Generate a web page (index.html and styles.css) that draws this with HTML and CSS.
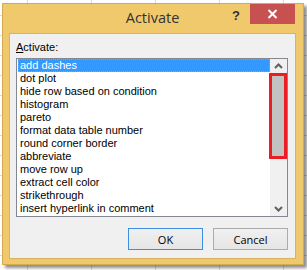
FILE: index.html
```html
<!DOCTYPE html>
<html lang="en">
<head>
  <meta charset="UTF-8">
  <title>Activate</title>
  <link rel="stylesheet" href="styles.css">
</head>
<body>
<div class="sheet">

  <!-- Dialog window -->
  <div class="dialog">
    <div class="titlebar">
      <span class="title">Activate</span>
      <span class="help">?</span>
      <span class="close">
        <svg width="11" height="10" viewBox="0 0 11 10"><path d="M1.5 1 L9.5 9 M9.5 1 L1.5 9" stroke="#fff" stroke-width="2"/></svg>
      </span>
    </div>

    <div class="client">
      <label class="caption"><u>A</u>ctivate:</label>

      <div class="listbox">
        <ul class="items">
          <li class="selected">add dashes</li>
          <li>dot plot</li>
          <li>hide row based on condition</li>
          <li>histogram</li>
          <li>pareto</li>
          <li>format data table number</li>
          <li>round corner border</li>
          <li>abbreviate</li>
          <li>move row up</li>
          <li>extract cell color</li>
          <li>strikethrough</li>
          <li>insert hyperlink in comment</li>
        </ul>
        <div class="scrollbar">
          <div class="arrow">
            <svg width="9" height="6" viewBox="0 0 9 6"><path d="M1 5 L4.5 1.5 L8 5" fill="none" stroke="#606060" stroke-width="2"/></svg>
          </div>
          <div class="track">
            <div class="thumb"></div>
          </div>
          <div class="arrow">
            <svg width="9" height="6" viewBox="0 0 9 6"><path d="M1 1 L4.5 4.5 L8 1" fill="none" stroke="#606060" stroke-width="2"/></svg>
          </div>
        </div>
      </div>

      <div class="buttons">
        <button class="btn btn-default">OK</button>
        <button class="btn">Cancel</button>
      </div>
    </div>
  </div>

</div>
</body>
</html>
```

FILE: styles.css
```css
body {
  margin: 0;
  font-family: "Liberation Sans", Arial, sans-serif;
}

.sheet {
  width: 307px;
  height: 270px;
  overflow: hidden;
  background-color: #fff;
  background-image:
    linear-gradient(to right, #dadada 1px, transparent 1px),
    linear-gradient(to bottom, #dadada 1px, transparent 1px);
  background-size: 64px 20px;
  background-position: 27px 15px;
  padding-top: 3px;
  box-sizing: border-box;
}

.dialog {
  margin-left: 2px;
  width: 302px;
  height: 262px;
  box-sizing: border-box;
  background: #f1c96d;
  border: 1px solid #d5ab52;
  padding: 0 7px 5px 6px;
  display: flex;
  flex-direction: column;
  box-shadow: 3px 3px 3px rgba(0,0,0,0.45);
}

.titlebar {
  height: 29px;
  display: flex;
  align-items: flex-start;
  position: relative;
}

.title {
  position: absolute;
  left: 0;
  right: 0;
  top: 4px;
  text-align: center;
  font-family: "Open Sans", sans-serif;
  font-size: 14.5px;
  color: #333;
}

.help {
  margin-left: auto;
  margin-top: 4px;
  margin-right: 10px;
  font-family: "Liberation Sans", sans-serif;
  font-weight: bold;
  font-size: 13px;
  color: #333;
  position: relative;
}

.close {
  width: 45px;
  height: 20px;
  background: #c75050;
  display: flex;
  align-items: center;
  justify-content: center;
  margin-right: 1px;
  position: relative;
}

.client {
  flex: 1;
  background: #f0f0f0;
  border: 1px solid #d9b460;
  padding: 7px 7px 0 6px;
}

.caption {
  display: block;
  font-size: 11px;
  line-height: 13px;
  color: #000;
  margin-bottom: 4px;
}

.listbox {
  height: 159px;
  box-sizing: border-box;
  border: 1px solid #828790;
  background: #fff;
  display: flex;
}

.items {
  flex: 1;
  list-style: none;
  margin: 0;
  padding: 0 0 0 1px;
  font-size: 11px;
  line-height: 13px;
  color: #000;
}

.items li {
  padding-left: 2px;
  white-space: nowrap;
}

.items li.selected {
  background: #3399ff;
  color: #fff;
  outline: 1px dotted #e8903a;
  outline-offset: -1px;
}

.scrollbar {
  width: 17px;
  background: #f0f0f0;
  display: flex;
  flex-direction: column;
}

.arrow {
  height: 14px;
  display: flex;
  align-items: center;
  justify-content: center;
}

.track {
  flex: 1;
  position: relative;
}

.thumb {
  height: 80px;
  margin-top: 0;
  margin-left: -1px;
  background: #c2c2c2;
  border: 3px solid #ec1c24;
}

.buttons {
  display: flex;
  justify-content: flex-end;
  gap: 10px;
  margin-top: 11px;
}

.btn {
  width: 75px;
  height: 22px;
  border: 1px solid #acacac;
  background: linear-gradient(#f0f0f0, #e5e5e5);
  font-family: "Open Sans", sans-serif;
  font-size: 11px;
  color: #000;
  padding: 0;
}

.btn-default {
  border-color: #3c8fe0;
}
```
